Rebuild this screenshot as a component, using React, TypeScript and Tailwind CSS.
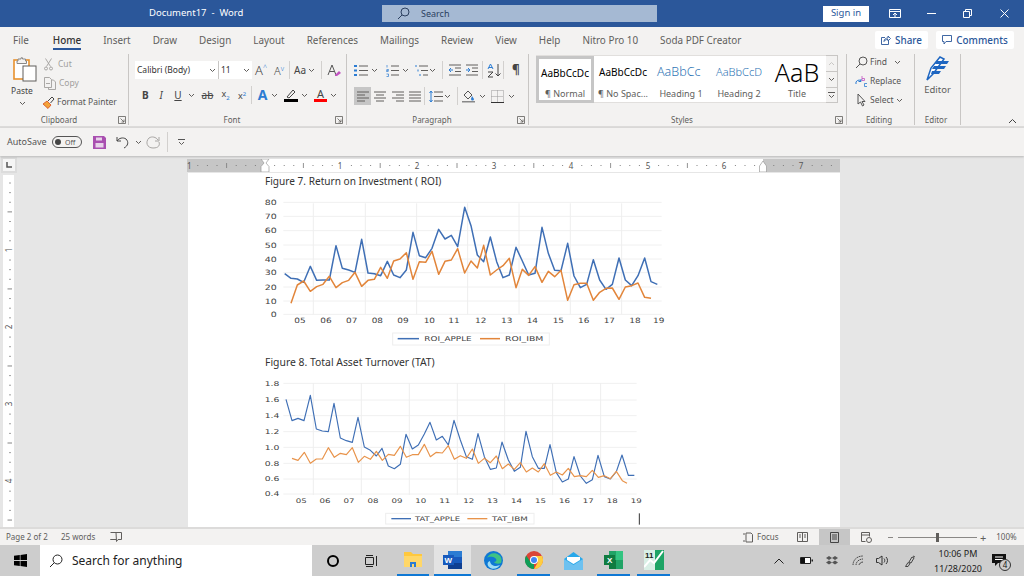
import React from "react";

const Chev = ({ c = "#605e5c", w = 7 }: { c?: string; w?: number }) => (
  <svg width={w} height="5" viewBox="0 0 7 5" fill="none" stroke={c} strokeWidth="1" className="shrink-0">
    <path d="M1 1l2.5 2.5L6 1" />
  </svg>
);
const Sep = ({ h = "h-[18px]" }: { h?: string }) => <div className={`w-px bg-[#d2d0ce] shrink-0 ${h}`} />;

const Lines = ({ kind }: { kind: "left" | "center" | "right" | "just" }) => {
  const rows: Record<string, string> = {
    left: "M1 2h12M1 5h8M1 8h12M1 11h8",
    center: "M1 2h12M3 5h8M1 8h12M3 11h8",
    right: "M1 2h12M5 5h8M1 8h12M5 11h8",
    just: "M1 2h12M1 5h12M1 8h12M1 11h12",
  };
  return (
    <svg width="14" height="13" viewBox="0 0 14 13" stroke="#605e5c" strokeWidth="1" fill="none">
      <path d={rows[kind]} />
    </svg>
  );
};

const Launcher = () => (
  <svg width="8" height="8" viewBox="0 0 8 8" fill="none" stroke="#605e5c" strokeWidth="0.8" className="shrink-0">
    <path d="M0.5 7.5V0.5H7.5V7.5ZM2.5 2.5L6 6M6 3.5V6H3.5" />
  </svg>
);

const Group = ({ label, w, children, launcher = true, pr = "pr-[3px]" }: { label: string; w: string; children: React.ReactNode; launcher?: boolean; pr?: string }) => (
  <div className={`${w} shrink-0 h-[71px] border-r border-[#c8c6c4] flex flex-col`}>
    <div className="flex-1 min-h-0">{children}</div>
    <div className={`h-[11px] flex items-center ${pr}`}>
      <span className="flex-1 text-center text-[8px] leading-none text-[#605e5c]">{label}</span>
      {launcher && <Launcher />}
    </div>
  </div>
);

const StyleItem = ({ name, preview, cls }: { name: string; preview: string; cls: string }) => (
  <div className="w-[58px] h-[47px] shrink-0 flex flex-col items-center overflow-hidden">
    <div className={`h-[32px] w-full flex items-center justify-center overflow-hidden whitespace-nowrap ${cls}`}>{preview}</div>
    <div className="text-[9px] leading-[12px] text-[#605e5c] whitespace-nowrap">{name}</div>
  </div>
);

const apple1 = "104,296 123,310 142,312 161,322 181,274 200,316 219,315 238,315 258,212 277,280 296,285 315,292 335,193 354,294 373,296 392,302 412,259 431,300 450,308 469,285 489,172 508,242 527,248 546,220 566,163 585,192 604,181 623,215 644,97 663,152 682,240 701,260 721,186 740,260 759,308 778,300 798,217 817,258 836,300 855,295 876,157 895,235 914,286 933,287 953,205 972,303 991,338 1010,328 1030,254 1049,315 1068,343 1087,328 1107,249 1126,315 1145,332 1164,302 1184,249 1203,320 1222,328";
const ibm1 = "123,385 142,330 161,318 181,349 200,335 219,328 238,304 258,338 277,323 296,316 315,292 335,334 354,316 373,313 392,277 412,310 431,258 450,252 469,233 489,313 508,260 527,262 546,229 566,298 585,259 604,255 623,221 644,294 663,258 682,279 701,211 721,300 740,285 759,272 778,250 798,338 817,283 836,301 855,275 876,322 895,289 914,305 933,286 953,376 972,329 991,325 1010,325 1030,376 1049,352 1068,340 1087,339 1107,373 1126,336 1145,332 1164,324 1184,367 1203,370";
const apple2 = "108,148 126,212 144,205 162,212 181,136 199,237 217,243 235,245 252,160 271,264 289,272 307,277 324,202 343,291 361,301 379,318 396,295 415,348 433,356 451,343 468,253 487,297 505,285 523,252 540,217 559,270 577,259 595,285 612,211 631,270 649,320 667,328 684,251 703,320 721,358 739,354 756,276 775,330 793,364 811,352 828,244 847,320 865,355 883,355 900,284 919,368 937,396 955,387 972,320 991,378 1009,400 1027,389 1044,316 1063,380 1081,387 1099,365 1116,315 1135,376 1153,376";
const ibm2 = "126,325 144,331 163,307 181,340 199,327 217,327 235,293 253,322 271,310 289,314 307,293 325,337 343,319 361,328 379,304 397,331 415,313 433,316 451,289 469,322 487,314 505,314 523,283 541,320 559,307 577,309 595,287 613,328 631,317 649,325 667,297 685,340 703,325 721,338 739,318 757,356 775,342 793,358 811,338 829,366 847,354 865,366 883,341 901,376 919,366 937,375 955,355 973,380 991,377 1009,380 1027,361 1045,382 1063,377 1081,386 1099,364 1117,392 1131,400";

const years = ["05", "06", "07", "08", "09", "10", "11", "12", "13", "14", "15", "16", "17", "18", "19"];

const Chart1 = () => {
  const ys: [string, number][] = [["80", 82], ["70", 124], ["60", 167], ["50", 210], ["40", 252], ["30", 293], ["20", 336], ["10", 378], ["0", 418]];
  const xs = [150, 228, 305, 382, 459, 538, 612, 692, 770, 847, 925, 1001, 1078, 1155, 1226];
  return (
    <svg width="430" height="155" viewBox="0 60 1290 465" className="shrink-0" fontFamily="'DejaVu Sans',sans-serif">
      {ys.map(([l, y]) => (
        <g key={l}>
          <line x1="100" x2="1235" y1={y} y2={y} stroke="#f0f0f0" strokeWidth="3" />
          <text x={l === "0" ? 62 : 44} y={y + 8} fontSize="22" fill="#404040" textLength={l === "0" ? 18 : 36} lengthAdjust="spacingAndGlyphs">{l}</text>
        </g>
      ))}
      {[190, 346, 500, 653, 807, 961, 1115].map((x) => (
        <line key={x} x1={x} x2={x} y1="85" y2="418" stroke="#eeeeee" strokeWidth="3" />
      ))}
      <polyline points={apple1} fill="none" stroke="#3f6fb5" strokeWidth="4.5" strokeLinejoin="round" />
      <polyline points={ibm1} fill="none" stroke="#e2853a" strokeWidth="4.5" strokeLinejoin="round" />
      {years.map((t, i) => (
        <text key={t} x={xs[i] - 17} y="445" fontSize="22" fill="#404040" textLength={34} lengthAdjust="spacingAndGlyphs">{t}</text>
      ))}
      <rect x="428" y="474" width="470" height="36" fill="#fff" stroke="#eeeeee" strokeWidth="3" />
      <line x1="443" x2="507" y1="491" y2="491" stroke="#3f6fb5" strokeWidth="4.5" />
      <text x="523" y="498" fontSize="20" fill="#404040" textLength={142} lengthAdjust="spacingAndGlyphs">ROI_APPLE</text>
      <line x1="690" x2="750" y1="491" y2="491" stroke="#e2853a" strokeWidth="4.5" />
      <text x="765" y="498" fontSize="20" fill="#404040" textLength={115} lengthAdjust="spacingAndGlyphs">ROI_IBM</text>
    </svg>
  );
};

const Chart2 = () => {
  const ys: [string, number][] = [["1.8", 100], ["1.6", 150], ["1.4", 197], ["1.2", 245], ["1.0", 292], ["0.8", 340], ["0.6", 387], ["0.4", 432]];
  return (
    <svg width="430" height="152" viewBox="0 75 1290 456" className="shrink-0" fontFamily="'DejaVu Sans',sans-serif">
      {ys.map(([l, y]) => (
        <g key={l}>
          <line x1="100" x2="1160" y1={y} y2={y} stroke="#f0f0f0" strokeWidth="3" />
          <text x="44" y={y + 7} fontSize="20" fill="#404040" textLength={44} lengthAdjust="spacingAndGlyphs">{l}</text>
        </g>
      ))}
      {[190, 334, 478, 622, 764, 908, 1052].map((x) => (
        <line key={x} x1={x} x2={x} y1="100" y2="435" stroke="#eeeeee" strokeWidth="3" />
      ))}
      <polyline points={apple2} fill="none" stroke="#3f6fb5" strokeWidth="3.5" strokeLinejoin="round" />
      <polyline points={ibm2} fill="none" stroke="#e8934a" strokeWidth="3.5" strokeLinejoin="round" />
      {years.map((t, i) => (
        <text key={t} x={137 + i * 71.8} y="458" fontSize="19" fill="#404040" textLength={33} lengthAdjust="spacingAndGlyphs">{t}</text>
      ))}
      <rect x="407" y="490" width="445" height="32" fill="#fff" stroke="#eeeeee" strokeWidth="3" />
      <line x1="424" x2="483" y1="506" y2="506" stroke="#3f6fb5" strokeWidth="4" />
      <text x="495" y="512" fontSize="19" fill="#404040" textLength={135} lengthAdjust="spacingAndGlyphs">TAT_APPLE</text>
      <line x1="652" x2="712" y1="506" y2="506" stroke="#e8934a" strokeWidth="4" />
      <text x="726" y="512" fontSize="19" fill="#404040" textLength={107} lengthAdjust="spacingAndGlyphs">TAT_IBM</text>
      <line x1="1168" x2="1168" y1="490" y2="524" stroke="#333" strokeWidth="3" />
    </svg>
  );
};

const HRuler = () => {
  const ticks: React.ReactNode[] = [];
  for (let i = -8; i <= 60; i++) {
    const x = 78 + i * 9.6;
    if (x < 8 || x > 650 || i % 8 === 0) continue;
    ticks.push(
      i % 4 === 0 ? (
        <line key={i} x1={x} x2={x} y1="4" y2="9" stroke="#777" strokeWidth="0.8" />
      ) : (
        <circle key={i} cx={x} cy="6.5" r="0.6" fill="#777" />
      )
    );
  }
  return (
    <svg width="653" height="13" viewBox="0 0 653 13" className="shrink-0" fontFamily="'Noto Sans',sans-serif">
      <rect width="653" height="13" fill="#ffffff" />
      <rect width="78" height="13" fill="#c6c6c6" />
      <rect x="576" width="77" height="13" fill="#c6c6c6" />
      {ticks}
      {[[0, "1"], [153, "1"], [230, "2"], [307, "3"], [384, "4"], [461, "5"], [537, "6"], [614, "7"]].map(([x, t], i) => (
        <text key={i} x={x as number} y="9.5" fontSize="8" fill="#555" textAnchor={i === 0 ? "start" : "middle"}>{t}</text>
      ))}
      <path d="M74 0h8l-3 4 3 3.500v5.500h-8v-5.500l3-3.500z" fill="#fff" stroke="#999" strokeWidth="0.7" />
      <path d="M576 2l3.500 5v6h-7v-6z" fill="#fff" stroke="#999" strokeWidth="0.7" />
    </svg>
  );
};

const VRuler = () => {
  const ticks: React.ReactNode[] = [];
  for (let i = 0; i <= 35; i++) {
    const y = 8 + i * 9.63;
    if (i % 8 === 7) continue;
    ticks.push(
      i % 8 === 3 ? (
        <line key={i} x1="4.500" x2="9" y1={y} y2={y} stroke="#666" strokeWidth="0.8" />
      ) : (
        <line key={i} x1="6" x2="8" y1={y} y2={y} stroke="#888" strokeWidth="0.8" />
      )
    );
  }
  return (
    <svg width="11" height="352" viewBox="0 0 11 352" className="mt-[2px]" fontFamily="'Noto Sans',sans-serif">
      <rect width="11" height="352" fill="#fff" />
      {ticks}
      {[[1, 75], [2, 152], [3, 229], [4, 306]].map(([n, y]) => (
        <text key={n} x="6.500" y={y} fontSize="8" fill="#555" textAnchor="middle" transform={`rotate(-90 6.5 ${y})`} dominantBaseline="middle">{n}</text>
      ))}
    </svg>
  );
};

const TabNames = ["File", "Home", "Insert", "Draw", "Design", "Layout", "References", "Mailings", "Review", "View", "Help", "Nitro Pro 10", "Soda PDF Creator"];

const WinLogo = () => (
  <svg width="13" height="13" viewBox="0 0 13 13" fill="#000">
    <path d="M0 1.800L5.800 1v5.100H0zM6.500.9L13 0v6.100H6.500zM0 6.900h5.800V12L0 11.200zM6.500 6.900H13V13l-6.500-.9z" />
  </svg>
);

export default function App() {
  return (
    <div className="w-[1024px] h-[576px] overflow-hidden flex flex-col bg-[#e6e6e6] font-['Noto_Sans',sans-serif] text-[#444]">
      {/* Title bar */}
      <div className="h-[27px] bg-[#2b579a] flex items-center shrink-0 text-white">
        <div className="w-[382px] pl-[149px] shrink-0 text-[9.5px] whitespace-nowrap">Document17&nbsp; -&nbsp; Word</div>
        <div className="w-[275px] h-[17px] bg-[#a5b9d3] flex items-center pl-[15px] gap-[11px] shrink-0 text-[#2b3f5f]">
          <svg width="13" height="13" viewBox="0 0 13 13" fill="none" stroke="#2b3f5f" strokeWidth="1"><circle cx="8" cy="5" r="4" /><path d="M5 8l-4 4" /></svg>
          <span className="text-[9px]">Search</span>
        </div>
        <div className="ml-[166px] w-[46px] h-[16px] bg-white text-[#2b579a] text-[9.5px] flex items-center justify-center shrink-0">Sign in</div>
        <div className="ml-[20px] w-[12px] shrink-0">
          <svg width="12" height="10" viewBox="0 0 12 10" fill="none" stroke="#fff" strokeWidth="1"><path d="M.5.500h11v8H.5zM.5 2.500h11M6 8V4.500M4 6l2-2 2 2" /></svg>
        </div>
        <div className="ml-[26px] w-[9px] h-px bg-white shrink-0" />
        <div className="ml-[27px] shrink-0">
          <svg width="9" height="9" viewBox="0 0 9 9" fill="none" stroke="#fff" strokeWidth="1"><path d="M.5 2.500h6v6h-6zM2.500 2.500v-2h6v6h-2" /></svg>
        </div>
        <div className="ml-[28px] shrink-0">
          <svg width="9" height="9" viewBox="0 0 9 9" fill="none" stroke="#fff" strokeWidth="1"><path d="M.5.500l8 8M8.500.500l-8 8" /></svg>
        </div>
      </div>

      {/* Tabs */}
      <div className="h-[26px] bg-[#f3f2f1] flex items-center pl-[13px] gap-[22px] shrink-0 text-[9.9px] text-[#605e5c] whitespace-nowrap">
        {TabNames.map((t) => (
          <div key={t} className={t === "Home" ? "relative ml-[2px] text-[#333] font-medium" : ""}>
            {t}
            {t === "Home" && <div className="absolute left-0 right-0 top-[15px] h-[2px] bg-[#2b579a]" />}
          </div>
        ))}
        <div className="ml-auto mr-[10px] flex gap-[8px] text-[#2b579a] font-medium">
          <div className="w-[53px] h-[18px] bg-white rounded-[2px] flex items-center justify-center gap-[4px]">
            <svg width="10" height="10" viewBox="0 0 10 10" fill="none" stroke="#2b579a" strokeWidth="0.9"><path d="M4 2.500H.5v7h7V6M3 6.500C3 4 5 3 7 3V1l2.500 2.500L7 6V4.500C5 4.500 4 5 3 6.500z" /></svg>
            Share
          </div>
          <div className="w-[78px] h-[18px] bg-white rounded-[2px] flex items-center justify-center gap-[4px]">
            <svg width="10" height="10" viewBox="0 0 10 10" fill="none" stroke="#2b579a" strokeWidth="0.9"><path d="M.5.500h9v6H4L2 9V6.500H.5z" /></svg>
            Comments
          </div>
        </div>
      </div>

      {/* Ribbon */}
      <div className="h-[75px] bg-[#f3f2f1] border-b-2 border-[#dcdbda] flex items-start shrink-0 pt-px">
        <Group label="Clipboard" w="w-[129px]" pr="pr-[2px]">
          <div className="flex h-full">
            <div className="w-[44px] flex flex-col items-center pt-[3px]">
              <svg width="24" height="25" viewBox="0 0 24 25" fill="none" className="ml-[5px]">
                <rect x="1" y="3" width="15" height="19" fill="#fff" stroke="#e8912d" strokeWidth="1.600" />
                <path d="M5 4V2h3V0.800h1.500V2h3v2h1v2.500H4V4z" fill="#f3f2f1" stroke="#8a8886" />
                <rect x="10" y="9" width="13" height="15" fill="#fff" stroke="#605e5c" />
              </svg>
              <span className="text-[8.5px] leading-[12px] mt-[3px]">Paste</span>
              <span className="mt-[4px]"><Chev /></span>
            </div>
            <div className="flex-1 flex flex-col pt-[3px] gap-[4px] text-[8.5px]">
              <div className="h-[15px] flex items-center gap-[5px] text-[#a19f9d]">
                <svg width="9" height="13" viewBox="0 0 9 13" fill="none" stroke="#a19f9d" strokeWidth="0.9"><path d="M1.500 .5L6.500 8.500M7.500 .5L2.500 8.500" /><circle cx="2" cy="10.500" r="1.500" /><circle cx="7" cy="10.500" r="1.500" /></svg>
                Cut
              </div>
              <div className="h-[15px] flex items-center gap-[3px] text-[#a19f9d]">
                <svg width="12" height="13" viewBox="0 0 12 13" fill="none" stroke="#a19f9d" strokeWidth="0.9"><path d="M.5.500h5l2 2v8H.5zM7.500 3h2l2 2v7.500h-7v-2M6 6.500H2" /></svg>
                Copy
              </div>
              <div className="h-[14px] flex items-center gap-[2px] -ml-[2px] whitespace-nowrap text-[#555]">
                <svg width="13" height="13" viewBox="0 0 13 13" fill="none"><path d="M1 8l4-3 4 4-3 3.500z" fill="#f2a33a" stroke="#d84a1b" strokeWidth="0.8" /><path d="M6 5l4-4 2 2-3.500 4" stroke="#444" strokeWidth="1" /></svg>
                Format Painter
              </div>
            </div>
          </div>
        </Group>

        <Group label="Font" w="w-[218px]">
          <div className="flex flex-col pt-[7px] pl-[6px]">
            <div className="flex items-center h-[18px]">
              <div className="w-[83px] h-[18px] bg-white flex items-center px-[2px] justify-between text-[8.5px] text-[#333]">Calibri (Body)<Chev /></div>
              <div className="w-[34px] h-[18px] bg-white border-l border-[#c8c6c4] flex items-center px-[2px] justify-between text-[8.5px] text-[#333]">11<Chev /></div>
              <div className="w-[20px] pl-[3px] text-[13px] leading-none font-light text-[#444] whitespace-nowrap">A<span className="text-[7px] align-top text-[#2b7cd3]">^</span></div>
              <div className="w-[16px] pl-[2px] text-[11px] leading-none font-light text-[#444] whitespace-nowrap">A<span className="text-[7px] align-top text-[#2b7cd3]">v</span></div>
              <div className="ml-[1px]"><Sep /></div>
              <div className="w-[18px] pl-[4px] text-[10px] text-[#444]">Aa</div>
              <Chev />
              <div className="ml-[6px] mr-[5px]"><Sep /></div>
              <svg width="15" height="15" viewBox="0 0 15 15" fill="none"><path d="M1 12L5 2l4 10M2.500 8.500h5" stroke="#555" /><path d="M8 12l4-4 2 2-4 3H8z" fill="#c254c2" /></svg>
            </div>
            <div className="flex items-center h-[18px] mt-[7px] text-[#444] text-[10px]">
              <div className="w-[7px]" />
              <div className="w-[9px] font-bold">B</div>
              <div className="w-[20px] text-center italic">I</div>
              <div className="w-[14px] text-center underline">U</div>
              <span className="ml-[3px]"><Chev /></span>
              <div className="ml-[3px] w-[19px] text-center line-through">ab</div>
              <div className="w-[17px] text-center text-[9px] leading-none">x<span className="text-[6px] align-sub text-[#2b7cd3]">2</span></div>
              <div className="w-[16px] text-center text-[9px] leading-none">x<span className="text-[6px] align-top text-[#2b7cd3]">2</span></div>
              <div className="ml-[1px] mr-[3px]"><Sep /></div>
              <div className="w-[15px] text-center text-[14px] font-bold text-[#2b7cd3] leading-none">A</div>
              <span className="ml-[1px]"><Chev /></span>
              <div className="ml-[6px]">
                <svg width="14" height="14" viewBox="0 0 14 14" fill="none"><path d="M3 9l6-7 2 2-6 6z" stroke="#444" /><rect x="0" y="11" width="14" height="3" fill="#000" /></svg>
              </div>
              <span className="ml-[3px]"><Chev /></span>
              <div className="ml-[6px] w-[13px] flex flex-col items-center leading-none text-[11px]">A<div className="w-[13px] h-[3px] bg-[#f00]" /></div>
              <span className="ml-[3px]"><Chev /></span>
            </div>
          </div>
        </Group>

        <Group label="Paragraph" w="w-[182px]">
          <div className="flex flex-col pt-[7px] pl-[7px]">
            <div className="flex items-center h-[18px]">
              <svg width="14" height="13" viewBox="0 0 14 13" fill="none"><path d="M5 2h9M5 6.500h9M5 11h9" stroke="#605e5c" /><path d="M0 1h3v2H0zM0 5.500h3v2H0zM0 10h3v2H0z" fill="#2b7cd3" /></svg>
              <span className="ml-[3px]"><Chev /></span>
              <span className="w-[8px]" />
              <svg width="13" height="13" viewBox="0 0 13 13" fill="none"><path d="M5 2h8M5 6.500h8M5 11h8" stroke="#605e5c" /><path d="M1 1v2.500M.5 5.500h2v1h-2v1h2M.5 10h2v2.500h-2" stroke="#2b7cd3" strokeWidth="0.7" /></svg>
              <span className="ml-[3px]"><Chev /></span>
              <span className="w-[6px]" />
              <svg width="13" height="13" viewBox="0 0 13 13" fill="none"><path d="M4 2h9M6 6.500h7M8 11h5" stroke="#605e5c" /><path d="M1 1v2M3 5.500v2M5 10v2" stroke="#2b7cd3" /></svg>
              <span className="ml-[1px]"><Chev /></span>
              <div className="mx-[6px]"><Sep /></div>
              <svg width="12" height="12" viewBox="0 0 12 12" fill="none"><path d="M0 1h12M6 4h6M6 7.500h6M0 11h12" stroke="#605e5c" /><path d="M4 6H0M2 4L0 6l2 2" stroke="#2b7cd3" /></svg>
              <span className="w-[5px]" />
              <svg width="12" height="12" viewBox="0 0 12 12" fill="none"><path d="M0 1h12M6 4h6M6 7.500h6M0 11h12" stroke="#605e5c" /><path d="M0 6h4M2 4l2 2-2 2" stroke="#2b7cd3" /></svg>
              <div className="mx-[4px]"><Sep /></div>
              <svg width="14" height="15" viewBox="0 0 14 15" fill="none"><path d="M1 6l2.500-5L6 6M1.700 4.500h3.600" stroke="#2b7cd3" /><path d="M1 9h5l-5 5h5" stroke="#444" /><path d="M11 1v12M8.500 10.500L11 13l2.500-2.500" stroke="#444" /></svg>
              <div className="ml-[2px]"><Sep /></div>
              <span className="ml-[8px] text-[12px] font-bold text-[#444]">¶</span>
            </div>
            <div className="flex items-center h-[18px] mt-[8px]">
              <div className="w-[17px] h-[18px] bg-[#c6c6c6] flex items-center justify-center"><Lines kind="left" /></div>
              <div className="w-[18px] flex justify-center"><Lines kind="center" /></div>
              <div className="w-[17px] flex justify-center"><Lines kind="right" /></div>
              <div className="w-[17px] flex justify-center"><Lines kind="just" /></div>
              <div className="ml-[1px] mr-[2px]"><Sep /></div>
              <div className="w-[17px] flex justify-center">
                <svg width="14" height="13" viewBox="0 0 14 13" fill="none"><path d="M5 2h9M5 6.500h9M5 11h9" stroke="#605e5c" /><path d="M2 1v11M.5 3L2 1l1.500 2M.5 10L2 12l1.500-2" stroke="#2b7cd3" /></svg>
              </div>
              <Chev />
              <div className="ml-[6px] mr-[4px]"><Sep /></div>
              <svg width="14" height="14" viewBox="0 0 14 14" fill="none"><path d="M2 6l4-4 4 4-4 4z" stroke="#555" /><path d="M10 7l2 3a1 1 0 0 1-3 0z" fill="#2b7cd3" /><rect y="12" width="13" height="1.500" fill="#888" /></svg>
              <span className="ml-[3px]"><Chev /></span>
              <span className="w-[5px]" />
              <svg width="13" height="13" viewBox="0 0 13 13" fill="none" stroke="#999" strokeDasharray="1 1"><path d="M.5.500h12v12H.5zM6.500.500v12M.5 6.500h12" /><path d="M0 12.500h13" stroke="#333" strokeDasharray="none" /></svg>
              <span className="ml-[4px]"><Chev /></span>
            </div>
          </div>
        </Group>

        <Group label="Styles" w="w-[318px]">
          <div className="flex pt-[1px] pl-[7px]">
            <div className="flex h-[48px] bg-white border-t border-b border-[#e1dfdd]">
              <div className="w-[58px] h-[47px] border-[3px] border-[#c6c6c6] flex flex-col items-center overflow-hidden shrink-0">
                <div className="h-[29px] flex items-center text-[10px] text-black whitespace-nowrap">AaBbCcDc</div>
                <div className="text-[9px] leading-[12px] text-[#605e5c] whitespace-nowrap">¶ Normal</div>
              </div>
              <StyleItem name="¶ No Spac..." preview="AaBbCcDc" cls="text-[10px] text-black" />
              <StyleItem name="Heading 1" preview="AaBbCc" cls="text-[12.5px] text-[#2f75b5] font-light justify-start pl-[5px]" />
              <StyleItem name="Heading 2" preview="AaBbCcD" cls="text-[11px] text-[#2f75b5] font-light" />
              <StyleItem name="Title" preview="AaB" cls="text-[25px] leading-[27px] text-black font-light" />
            </div>
            <div className="flex flex-col w-[12px] h-[48px] border border-l-0 border-[#c8c6c4] shrink-0 bg-[#f3f2f1]">
              <div className="h-[16px] flex items-center justify-center border-b border-[#c8c6c4]"><svg width="7" height="5" viewBox="0 0 7 5" fill="none" stroke="#c8c6c4"><path d="M1 4l2.500-2.500L6 4" /></svg></div>
              <div className="h-[16px] flex items-center justify-center border-b border-[#c8c6c4]"><Chev /></div>
              <div className="flex-1 flex flex-col items-center justify-center gap-[1px]"><div className="w-[7px] h-px bg-[#605e5c]" /><Chev /></div>
            </div>
          </div>
        </Group>

        <Group label="Editing" w="w-[68px]" launcher={false}>
          <div className="flex flex-col pl-[8px] text-[8.5px] gap-[3px] text-[#555]">
            <div className="h-[16px] flex items-center gap-[2px]">
              <svg width="13" height="13" viewBox="0 0 13 13" fill="none" stroke="#555"><circle cx="8" cy="5" r="4" /><path d="M5 8l-4 4" /></svg>
              Find<span className="ml-[5px]"><Chev /></span>
            </div>
            <div className="h-[16px] flex items-center gap-[2px]">
              <svg width="13" height="13" viewBox="0 0 13 13" fill="none"><path d="M1 9a3 3 0 0 1 5-3M6 4v2.500H3.500" stroke="#2b7cd3" /><path d="M7 1v4.500h2.500v-2H7" stroke="#c254c2" strokeWidth="0.8" /><path d="M12 8.500H9.500v3H12" stroke="#2b7cd3" strokeWidth="0.8" /></svg>
              Replace
            </div>
            <div className="h-[16px] flex items-center gap-[2px]">
              <svg width="13" height="14" viewBox="0 0 13 14" fill="none" stroke="#555"><path d="M3 1v10l2.500-2 2 4 1.500-1-2-3.500h3z" /></svg>
              Select<Chev />
            </div>
          </div>
        </Group>

        <Group label="Editor" w="w-[46px]" launcher={false}>
          <div className="flex flex-col items-center pt-[2px]">
            <svg width="26" height="27" viewBox="0 0 26 27" fill="none">
              <path d="M2 24L6 12 15 1l4 2-11 15z" fill="#fff" stroke="#1e66c1" strokeWidth="1.500" />
              <path d="M12 5h12l-2 3H10zM9 10h12l-2 3H7zM7 15h9l-2 3H6z" fill="#1e66c1" />
            </svg>
            <span className="text-[9.5px] leading-[12px] mt-[1px] text-[#605e5c]">Editor</span>
          </div>
        </Group>

        <div className="flex-1 h-[71px] flex items-end justify-end pr-[7px] pb-[1px]">
          <svg width="9" height="6" viewBox="0 0 9 6" fill="none" stroke="#444"><path d="M1 5l3.500-3.500L8 5" /></svg>
        </div>
      </div>

      {/* QAT */}
      <div className="h-[28px] bg-[#f3f2f1] flex items-center pl-[7px] shrink-0 shadow-[0_1px_2px_rgba(0,0,0,0.2)] relative text-[#555]">
        <span className="text-[9px] w-[45px]">AutoSave</span>
        <div className="w-[30px] h-[12px] rounded-full border border-[#555] flex items-center pl-[2px] gap-[4px] text-[7px] leading-none shrink-0">
          <div className="w-[6px] h-[6px] rounded-full bg-[#444]" />Off
        </div>
        <div className="ml-[11px] shrink-0">
          <svg width="13" height="13" viewBox="0 0 13 13"><path d="M0 0h11l2 2v11H0z" fill="#a94fb0" /><path d="M3 1.500h6v3H3zM2.500 7h8v4.500h-8z" fill="#e7d3e9" /></svg>
        </div>
        <div className="ml-[10px] shrink-0">
          <svg width="14" height="14" viewBox="0 0 14 14" fill="none" stroke="#444"><path d="M1 2v4h4M1 6c2-3 6-4 9-2 3 3 2 7-2 9" /></svg>
        </div>
        <span className="ml-[5px]"><Chev /></span>
        <div className="ml-[4px] shrink-0">
          <svg width="14" height="14" viewBox="0 0 14 14" fill="none" stroke="#a8a6a4"><path d="M13 2v4H9M12 5C10 2 6 1 3 3-1 7 1 13 7 13s7-3 6-6" /></svg>
        </div>
        <div className="ml-[7px]"><Sep h="h-[20px]" /></div>
        <div className="ml-[10px] flex flex-col items-center gap-[1px]"><div className="w-[7px] h-px bg-[#555]" /><Chev /></div>
      </div>

      {/* Ruler */}
      <div className="h-[17px] flex items-center shrink-0 pt-[1px]">
        <div className="w-[187px] pl-[1px] shrink-0">
          <div className="w-[16px] h-[16px] bg-[#f5f5f5] border-2 border-[#dcdcdc] flex items-center justify-center">
            <svg width="6" height="6" viewBox="0 0 6 6" fill="none" stroke="#555" strokeWidth="1.500"><path d="M1 0v5h5" /></svg>
          </div>
        </div>
        <HRuler />
      </div>

      {/* Document */}
      <div className="h-[354px] flex shrink-0 overflow-hidden">
        <div className="w-[188px] pl-[3px] shrink-0"><VRuler /></div>
        <div className="w-[652px] bg-white shrink-0 flex flex-col overflow-hidden">
          <div className="pl-[77px] text-[10.1px] leading-[16px] text-[#333] whitespace-nowrap">Figure 7. Return on Investment ( ROI)</div>
          <div className="mt-[6px] pl-[62px]"><Chart1 /></div>
          <div className="mt-[4px] pl-[77px] text-[10.4px] leading-[16px] text-[#333] whitespace-nowrap">Figure 8. Total Asset Turnover (TAT)</div>
          <div className="mt-[5px] pl-[62px]"><Chart2 /></div>
        </div>
      </div>

      {/* Status bar */}
      <div className="h-[18px] bg-[#f3f2f1] border-t-2 border-[#dcdbda] flex items-center shrink-0 pl-[6px] text-[8px] text-[#605e5c]">
        <span className="w-[55px]">Page 2 of 2</span>
        <span className="w-[49px]">25 words</span>
        <svg width="13" height="11" viewBox="0 0 13 11" fill="none" stroke="#605e5c"><path d="M.5.500h11v7H8l-1.500 2L6 .5M6 7.500H.5z" /></svg>
        <div className="ml-[620px] flex items-center gap-[4px] w-[54px] shrink-0">
          <svg width="10" height="11" viewBox="0 0 10 11" fill="none" stroke="#605e5c"><path d="M3 1h5l1.500 1.500V10H3zM1 1v2M1 8v2" /></svg>
          Focus
        </div>
        <div className="w-[22px] shrink-0">
          <svg width="11" height="10" viewBox="0 0 11 10" fill="none" stroke="#605e5c"><path d="M.5.500h10v9H.5zM5.500.500v9M2 3h2M2 5h2M7 3h2M7 5h2" /></svg>
        </div>
        <div className="w-[31px] h-[16px] bg-[#c6c6c6] flex items-center justify-center shrink-0">
          <svg width="9" height="11" viewBox="0 0 9 11" fill="none" stroke="#444"><path d="M.5.500h8v10h-8zM2 3h5M2 5h5M2 7h5" /></svg>
        </div>
        <div className="ml-[11px] w-[27px] shrink-0">
          <svg width="11" height="11" viewBox="0 0 11 11" fill="none" stroke="#605e5c"><path d="M.5.500h8v4M.5.500v9h4M.5 3h8" /><circle cx="8" cy="8" r="2.500" /></svg>
        </div>
        <div className="w-[5px] h-px bg-[#8a8886] shrink-0" />
        <div className="ml-[5px] w-[79px] h-px bg-[#8a8886] relative shrink-0">
          <div className="absolute left-[38px] -top-[4px] w-[3px] h-[9px] bg-[#605e5c]" />
        </div>
        <span className="ml-[3px] text-[11px] leading-none">+</span>
        <span className="ml-[10px]">100%</span>
      </div>

      {/* Taskbar */}
      <div className="flex-1 bg-[#cdcdcd] flex items-center relative">
        <div className="w-[40px] flex justify-center shrink-0"><WinLogo /></div>
        <div className="w-[272px] h-[31px] bg-white flex items-center pl-[9px] gap-[9px] shrink-0 text-[12px] text-[#222]">
          <svg width="14" height="14" viewBox="0 0 14 14" fill="none" stroke="#222"><circle cx="8.500" cy="5.500" r="4.500" /><path d="M5.300 8.700L1 13" /></svg>
          Search for anything
        </div>
        <div className="ml-[15px] w-[12px] h-[12px] rounded-full border-2 border-black shrink-0" />
        <div className="ml-[26px] shrink-0">
          <svg width="13" height="12" viewBox="0 0 13 12" fill="none" stroke="#222"><path d="M.5 2.500h8v7h-8zM1 .5h7M1 11.500h7M11.500 1v10" /></svg>
        </div>
        <div className="ml-[19px] w-[32px] h-full flex items-center justify-center shrink-0 border-b-2 border-[#0f78d4]">
          <svg width="18" height="15" viewBox="0 0 18 15"><path d="M0 0h7l2 2h9v13H0z" fill="#ffc83d" /><path d="M0 4h18v11H0z" fill="#ffd768" /><path d="M6 15v-5h6v5h-2v-3H8v3z" fill="#2b7cd3" /></svg>
        </div>
        <div className="ml-[5px] w-[37px] h-full bg-[#e3e3e3] flex items-center justify-center shrink-0 border-b-2 border-[#0f78d4]">
          <svg width="19" height="18" viewBox="0 0 19 18"><path d="M5 0h14v18H5z" fill="#2b7cd3" /><path d="M5 6h14v6H5z" fill="#185abd" /><path d="M5 12h14v6H5z" fill="#103f91" /><rect x="0" y="4" width="11" height="10" fill="#185abd" /><text x="1.500" y="12" fontSize="8" fontWeight="700" fill="#fff" fontFamily="'Liberation Sans',sans-serif">W</text></svg>
        </div>
        <div className="ml-[13px] shrink-0">
          <svg width="19" height="19" viewBox="0 0 19 19"><circle cx="9.500" cy="9.500" r="9.500" fill="#0f78d4" /><path d="M3 7c2-5 8-6 12-3 3 2 3 6 2 8-2 1-6 1-7-1 3 0 3-3 1-4C8 5 4 6 3 7z" fill="#3ec285" /><path d="M6 10c0 3 3 5 6 5 2 0 3-1 4-1-2 4-8 5-11 2-2-2-2-5 1-6z" fill="#9fdcf5" /></svg>
        </div>
        <div className="ml-[14px] w-[33px] h-full flex items-center justify-center shrink-0 border-b-2 border-[#0f78d4]">
          <svg width="18" height="18" viewBox="0 0 18 18"><circle cx="9" cy="9" r="9" fill="#db4437" /><path d="M9 18a9 9 0 0 1-7.800-13.500L5.500 11l3.500 2z" fill="#0f9d58" /><path d="M9 5h8.100A9 9 0 0 1 9 18l4-7z" fill="#ffcd40" /><circle cx="9" cy="9" r="4" fill="#fff" /><circle cx="9" cy="9" r="3" fill="#4285f4" /></svg>
        </div>
        <div className="ml-[14px] shrink-0">
          <svg width="19" height="18" viewBox="0 0 19 18"><path d="M0 7l9.500-7L19 7v11H0z" fill="#28a8ea" /><path d="M0 7l9.500 6L19 7v11H0z" fill="#6dc1f0" /><path d="M3 5h13v3l-6.500 4L3 8z" fill="#fff" /></svg>
        </div>
        <div className="ml-[14px] w-[33px] h-full flex items-center justify-center shrink-0 border-b-2 border-[#0f78d4]">
          <svg width="19" height="18" viewBox="0 0 19 18"><path d="M5 0h14v18H5z" fill="#21a366" /><path d="M12 0h7v9h-7z" fill="#33c481" /><path d="M5 9h7v9H5z" fill="#107c41" /><rect x="0" y="4" width="11" height="10" fill="#107c41" /><text x="3" y="12" fontSize="8" fontWeight="700" fill="#fff" fontFamily="'Liberation Sans',sans-serif">X</text></svg>
        </div>
        <div className="ml-[7px] w-[33px] h-full flex items-center justify-center shrink-0 border-b-2 border-[#0f78d4]">
          <svg width="20" height="20" viewBox="0 0 20 20"><rect width="20" height="20" fill="#d9efe6" /><rect x="11" width="9" height="20" fill="#1ea465" /><path d="M0 17l6-7 4 3 9-12" fill="none" stroke="#fff" strokeWidth="2" /><text x="1" y="8" fontSize="8" fontWeight="700" fill="#222" fontFamily="'Liberation Sans',sans-serif">11</text></svg>
        </div>
        <div className="ml-[104px] shrink-0">
          <svg width="10" height="6" viewBox="0 0 10 6" fill="none" stroke="#222"><path d="M.5 5.500L5 1l4.500 4.500" /></svg>
        </div>
        <div className="ml-[16px] shrink-0">
          <svg width="13" height="7" viewBox="0 0 13 7"><path d="M.5.500h10v6H.5z" fill="#fff" stroke="#222" /><path d="M1 1h4v5H1z" fill="#111" /><path d="M11.500 2.500H13v2h-1.500z" fill="#222" /></svg>
        </div>
        <div className="ml-[13px] shrink-0">
          <svg width="12" height="10" viewBox="0 0 12 10" fill="#555"><path d="M3 0l3 2-3 2-3-2zM9 0l3 2-3 2-3-2zM3 4.500l3 2-3 2-3-2zM9 4.500l3 2-3 2-3-2z" /></svg>
        </div>
        <div className="ml-[14px] shrink-0">
          <svg width="12" height="11" viewBox="0 0 12 11" fill="none" stroke="#444"><path d="M1 10C1 5 5 1 11 1M4 10c0-3 3-6 7-6" strokeDasharray="1.500 0.700" /><path d="M7 10c0-1 2-3 4-3" /></svg>
        </div>
        <div className="ml-[12px] shrink-0">
          <svg width="13" height="11" viewBox="0 0 13 11" fill="none" stroke="#333"><path d="M.5 3.500h2L6 1v9L2.500 7.500h-2zM8 3.500c1 1 1 3 0 4M10 2c2 2 2 5 0 7" /></svg>
        </div>
        <div className="ml-[16px] shrink-0">
          <svg width="11" height="12" viewBox="0 0 11 12" fill="none" stroke="#444"><path d="M.5 11.500L3 7.500l2 1-2 3zM4 7l3-5 2 1-3 5zM8 1l2 1" /></svg>
        </div>
        <div className="ml-[9px] w-[66px] shrink-0 text-center text-[9px] leading-[15px] text-[#222]">
          <div>10:06 PM</div>
          <div>11/28/2020</div>
        </div>
        <div className="ml-[1px] relative shrink-0">
          <svg width="14" height="13" viewBox="0 0 14 13"><path d="M0 0h14v9H6l-3 3V9H0z" fill="#111" /><path d="M3 3h8M3 5.500h8" stroke="#fff" /></svg>
          <div className="absolute left-[7px] top-[5px] w-[12px] h-[12px] rounded-full border border-[#333] bg-[#cdcdcd] text-[8px] leading-[10px] text-center text-[#111]">4</div>
        </div>
      </div>
    </div>
  );
}
